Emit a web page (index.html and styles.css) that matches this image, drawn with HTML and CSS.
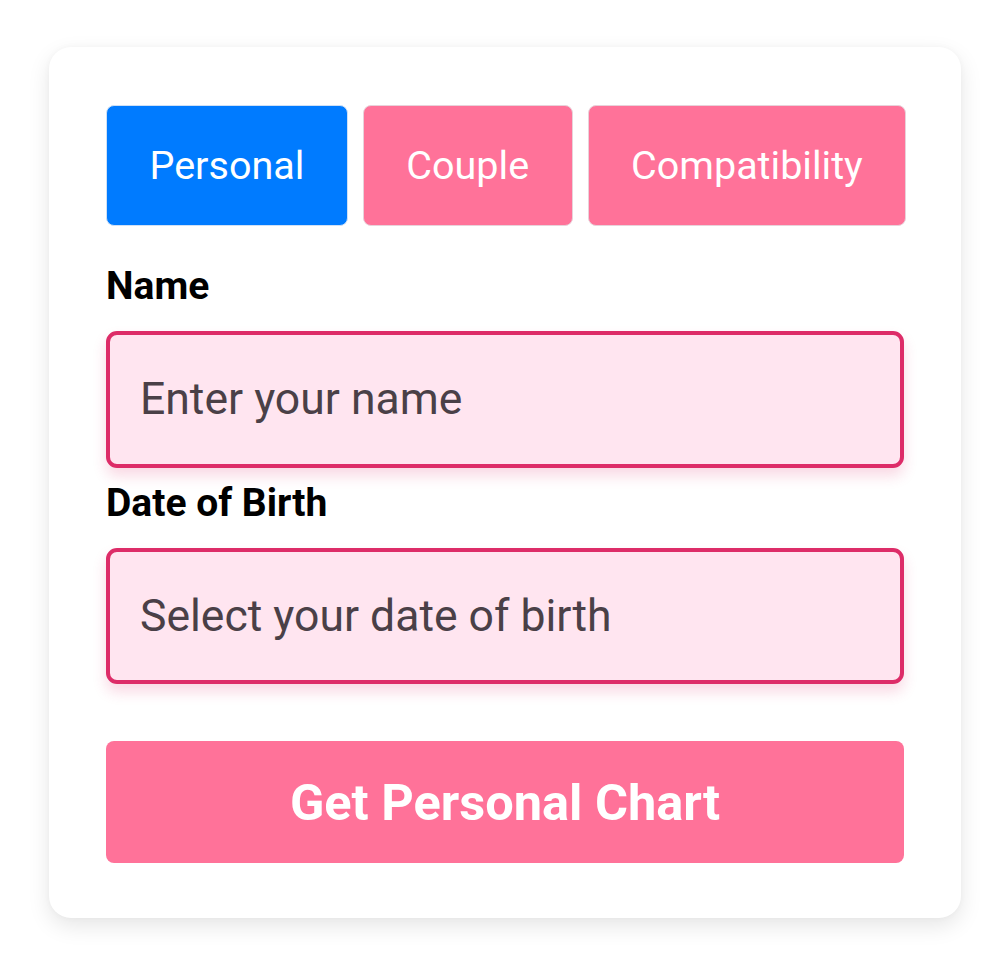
FILE: index.html
```html
<!DOCTYPE html>
<html>
<head>
<meta charset="utf-8">
<link rel="stylesheet" href="styles.css">
</head>
<body>
<div class="page">
  <div class="card">
    <div class="tabs">
      <button class="tab tab-active">Personal</button>
      <button class="tab">Couple</button>
      <button class="tab">Compatibility</button>
    </div>
    <label class="label">Name</label>
    <input class="field" type="text" placeholder="Enter your name">
    <label class="label">Date of Birth</label>
    <input class="field" type="text" placeholder="Select your date of birth">
    <button class="submit">Get Personal Chart</button>
  </div>
</div>
</body>
</html>
```
FILE: styles.css
```css
* { box-sizing: border-box; }
html, body { margin: 0; padding: 0; background: #ffffff; }
body { font-family: Roboto, "Liberation Sans", sans-serif; }
.page { padding: 47px 42px 47px 49px; }
.card {
  width: 912px;
  height: 871px;
  background: #ffffff;
  border-radius: 22px;
  box-shadow: 0 8px 22px rgba(0,0,0,0.10), 0 0 6px rgba(0,0,0,0.03);
  padding: 58px 56px 55px 57px;
  display: flex;
  flex-direction: column;
}
.tabs { display: flex; gap: 15px; margin-bottom: 25px; }
.tab {
  font-family: Roboto, "Liberation Sans", sans-serif;
  font-size: 39.5px;
  color: #ffffff;
  background: #ff7299;
  border: 1.5px solid #e8d2da;
  border-radius: 8px;
  height: 121px;
  padding: 0 42.5px;
  font-weight: 400;
}
.tab-active { background: #007bff; border-color: #cfe0f5; }
.label {
  display: block;
  font-size: 39px;
  font-weight: 700;
  color: #000000;
  line-height: 40px;
  margin: 15px 0 25px;
}
.field {
  display: block;
  width: 798px;
  height: 137px;
  border: 4px solid #dd2c68;
  border-radius: 11px;
  background: #ffe5f0;
  padding: 0 30px;
  font-family: Roboto, "Liberation Sans", sans-serif;
  font-size: 44.5px;
  color: #4a4047;
  box-shadow: 0 8px 14px rgba(221, 44, 104, 0.18);
  outline: none;
}
.field::placeholder { color: #4a4047; opacity: 1; }
.submit {
  margin-top: 57px;
  width: 798px;
  height: 122px;
  border: none;
  border-radius: 8px;
  background: #ff7299;
  color: #ffffff;
  font-family: Roboto, "Liberation Sans", sans-serif;
  font-size: 50.5px;
  font-weight: 700;
}
```
